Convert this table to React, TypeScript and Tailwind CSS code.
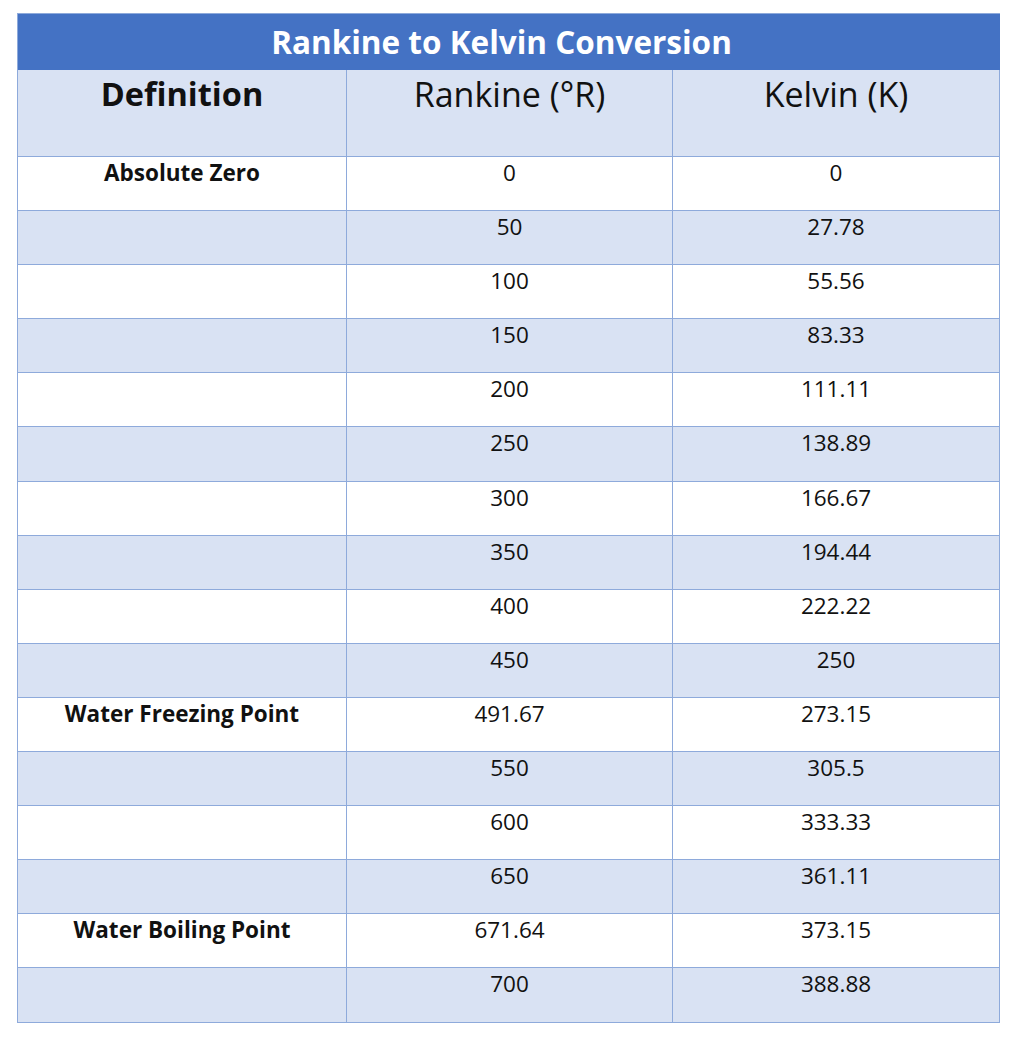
import React from "react";

type Row = { label?: string; rankine: string; kelvin: string };

const rows: Row[] = [
  { label: "Absolute Zero", rankine: "0", kelvin: "0" },
  { rankine: "50", kelvin: "27.78" },
  { rankine: "100", kelvin: "55.56" },
  { rankine: "150", kelvin: "83.33" },
  { rankine: "200", kelvin: "111.11" },
  { rankine: "250", kelvin: "138.89" },
  { rankine: "300", kelvin: "166.67" },
  { rankine: "350", kelvin: "194.44" },
  { rankine: "400", kelvin: "222.22" },
  { rankine: "450", kelvin: "250" },
  { label: "Water Freezing Point", rankine: "491.67", kelvin: "273.15" },
  { rankine: "550", kelvin: "305.5" },
  { rankine: "600", kelvin: "333.33" },
  { rankine: "650", kelvin: "361.11" },
  { label: "Water Boiling Point", rankine: "671.64", kelvin: "373.15" },
  { rankine: "700", kelvin: "388.88" },
];

const cell = "border-r border-b border-[#8eaadb] flex justify-center pt-[1px]";
const head = "border-r border-b border-[#8eaadb] flex justify-center pt-[2px]";

export default function App() {
  return (
    <div
      className="min-h-[1057px] bg-white pt-[13px] pl-[17px] text-[#111]"
      style={{ fontFamily: "'Open Sans', Lato, sans-serif" }}
    >
      <div className="w-[983px] border-l border-t border-[#8eaadb]">
        {/* Title bar */}
        <div className="h-[56px] bg-[#4472c4] border-r border-b border-[#4472c4] flex items-center justify-center pr-[14px]">
          <h1 className="text-[31.5px] leading-[40px] font-bold text-white">
            Rankine to Kelvin Conversion
          </h1>
        </div>

        {/* Column headers */}
        <div className="grid grid-cols-[329px_326px_327px] h-[87px] bg-[#d9e2f3]">
          <div className={head}>
            <span className="text-[32.5px] leading-[44px] font-bold">Definition</span>
          </div>
          <div className={head}>
            <span className="text-[34px] leading-[44px]">Rankine (°R)</span>
          </div>
          <div className={head}>
            <span className="text-[34px] leading-[44px]">Kelvin (K)</span>
          </div>
        </div>

        {/* Data rows */}
        {rows.map((r, i) => (
          <div
            key={r.rankine}
            className={
              "grid grid-cols-[329px_326px_327px] h-[54.1px] text-[22.5px] leading-[30px] " +
              (i % 2 === 0 ? "bg-white" : "bg-[#d9e2f3]")
            }
          >
            <div className={cell}>
              <span className="font-bold">{r.label ?? ""}</span>
            </div>
            <div className={cell}>
              <span>{r.rankine}</span>
            </div>
            <div className={cell}>
              <span>{r.kelvin}</span>
            </div>
          </div>
        ))}
      </div>
    </div>
  );
}
